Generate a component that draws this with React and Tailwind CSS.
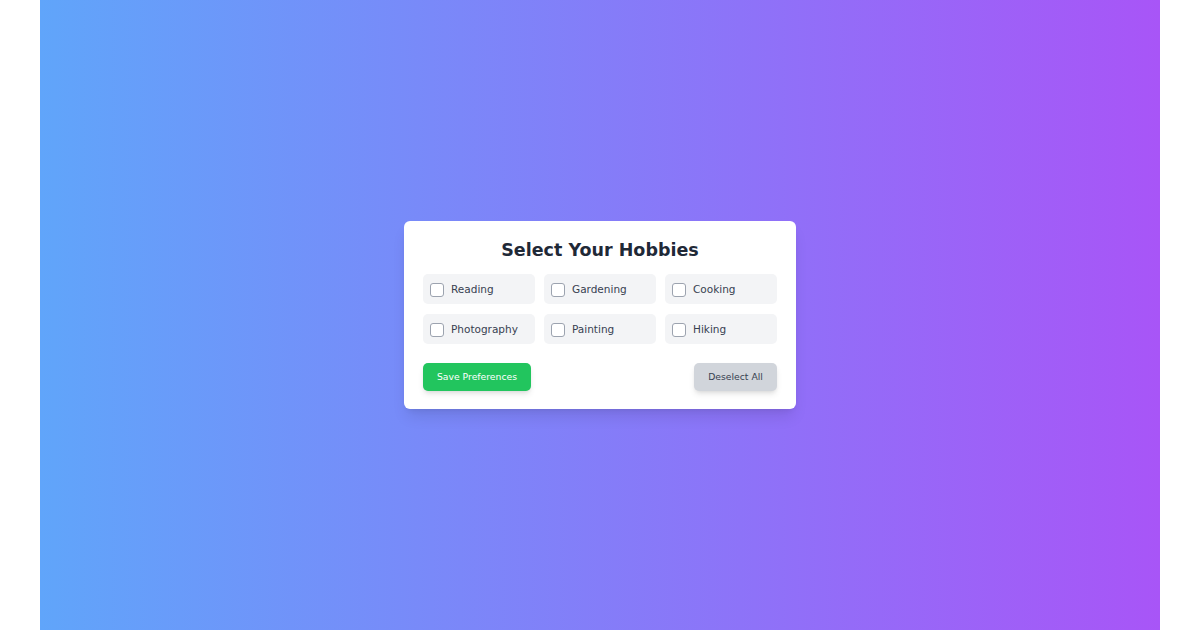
import React, { useState } from 'react';

const hobbies = ['Reading', 'Gardening', 'Cooking', 'Photography', 'Painting', 'Hiking'];

const HobbyOption = ({ label, checked, onToggle }) => (
  <label className="flex items-center h-[30px] pl-[7px] bg-[#f3f4f6] rounded-[5px] cursor-pointer">
    <span
      onClick={onToggle}
      className={`w-[14px] h-[14px] mt-[1px] border border-[#9ca3af] rounded-[3px] ${checked ? 'bg-[#22c55e]' : 'bg-white'}`}
    ></span>
    <span className="ml-[7px] text-[10.5px] leading-[14px] text-[#374151]">{label}</span>
  </label>
);

const App = () => {
  const [selected, setSelected] = useState([]);

  const toggle = (name) => {
    setSelected((prev) =>
      prev.includes(name) ? prev.filter((h) => h !== name) : [...prev, name]
    );
  };

  return (
    <div className="w-[1120px] mx-auto h-[630px] flex items-center justify-center bg-linear-to-r/srgb from-[#60a5fa] to-[#a855f7] font-['DejaVu_Sans',sans-serif]">
      <div className="w-[392px] bg-white rounded-[6px] shadow-lg px-[19px] pt-[17px] pb-[18px]">
        <h2 className="text-center text-[17.5px] leading-[24px] font-bold text-[#1f2937] mb-[12px]">
          Select Your Hobbies
        </h2>

        {/* Hobby grid */}
        <div className="grid grid-cols-3 gap-x-[9px] gap-y-[10px]">
          {hobbies.map((h) => (
            <HobbyOption
              key={h}
              label={h}
              checked={selected.includes(h)}
              onToggle={() => toggle(h)}
            />
          ))}
        </div>

        {/* Actions */}
        <div className="flex items-center justify-between mt-[19px]">
          <button className="w-[108px] h-[28px] flex items-center justify-center bg-[#22c55e] text-white text-[9.25px] rounded-[5px] shadow-md">
            Save Preferences
          </button>
          <button
            onClick={() => setSelected([])}
            className="w-[83px] h-[28px] flex items-center justify-center bg-[#d1d5db] text-[#374151] text-[9.25px] rounded-[5px] shadow-md"
          >
            Deselect All
          </button>
        </div>
      </div>
    </div>
  );
};

export default App;
